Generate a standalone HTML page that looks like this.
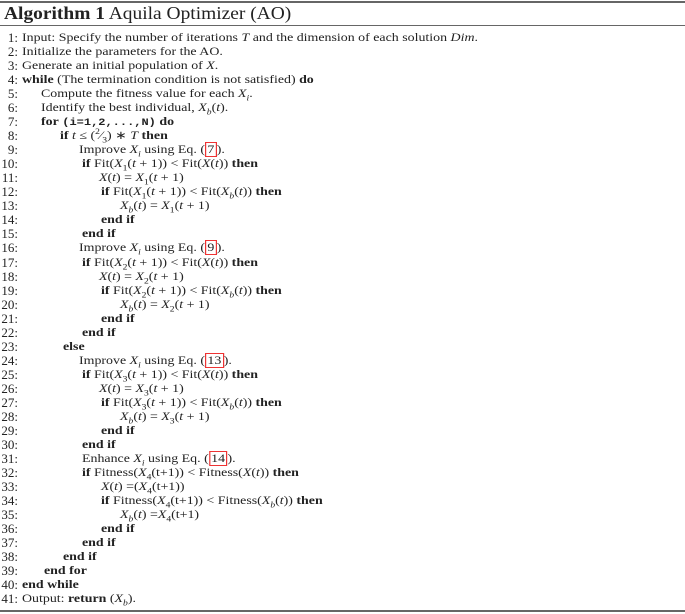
<!DOCTYPE html>
<html><head><style>
body{margin:0;width:685px;height:614px;background:#fff;position:relative;overflow:hidden;font-family:"Liberation Serif",serif;color:#222}
.r{position:absolute;left:0;width:685px;background:#666}
.t{position:absolute;left:4px;top:3px;font-size:18px;white-space:nowrap;transform:scaleX(1.08);transform-origin:left}
.l{position:absolute;font-size:11.6px;white-space:nowrap;line-height:14px;transform:scaleX(1.2);transform-origin:left}
.n{position:absolute;font-size:13px;line-height:14px;width:18px;text-align:right;left:0}
b{font-weight:bold}
.ref{border:1px solid #e33;padding:0 1px}
</style></head><body>
<div class="r" style="top:1px;height:2px"></div>
<div class="t"><b>Algorithm 1</b> Aquila Optimizer (AO)</div>
<div class="r" style="top:25px;height:1px"></div>
<div class="r" style="top:610px;height:2px"></div>
<div id="c"></div>
<script>
var L=[
[22,'Input: Specify the number of iterations <i>T</i> and the dimension of each solution <i>Dim</i>.'],
[22,'Initialize the parameters for the AO.'],
[22,'Generate an initial population of <i>X</i>.'],
[22,'<b>while</b> (The termination condition is not satisfied) <b>do</b>'],
[41,'Compute the fitness value for each <i>X<sub>i</sub></i>.'],
[41,'Identify the best individual, <i>X<sub>b</sub></i>(<i>t</i>).'],
[41,'<b>for</b> <b style="font-family:Liberation Mono,monospace;font-size:10px">(i=1,2,...,N)</b> <b>do</b>'],
[60,'<b>if</b> <i>t</i> ≤ (<sup>2</sup>⁄<sub>3</sub>) ∗ <i>T</i> <b>then</b>'],
[79,'Improve <i>X<sub>i</sub></i> using Eq. (<span class="ref">7</span>).'],
[82,'<b>if</b> Fit(<i>X</i><sub>1</sub>(<i>t</i> + 1)) &lt; Fit(<i>X</i>(<i>t</i>)) <b>then</b>'],
[99,'<i>X</i>(<i>t</i>) = <i>X</i><sub>1</sub>(<i>t</i> + 1)'],
[101,'<b>if</b> Fit(<i>X</i><sub>1</sub>(<i>t</i> + 1)) &lt; Fit(<i>X<sub>b</sub></i>(<i>t</i>)) <b>then</b>'],
[120,'<i>X<sub>b</sub></i>(<i>t</i>) = <i>X</i><sub>1</sub>(<i>t</i> + 1)'],
[101,'<b>end if</b>'],
[82,'<b>end if</b>'],
[79,'Improve <i>X<sub>i</sub></i> using Eq. (<span class="ref">9</span>).'],
[82,'<b>if</b> Fit(<i>X</i><sub>2</sub>(<i>t</i> + 1)) &lt; Fit(<i>X</i>(<i>t</i>)) <b>then</b>'],
[99,'<i>X</i>(<i>t</i>) = <i>X</i><sub>2</sub>(<i>t</i> + 1)'],
[101,'<b>if</b> Fit(<i>X</i><sub>2</sub>(<i>t</i> + 1)) &lt; Fit(<i>X<sub>b</sub></i>(<i>t</i>)) <b>then</b>'],
[120,'<i>X<sub>b</sub></i>(<i>t</i>) = <i>X</i><sub>2</sub>(<i>t</i> + 1)'],
[101,'<b>end if</b>'],
[82,'<b>end if</b>'],
[63,'<b>else</b>'],
[79,'Improve <i>X<sub>i</sub></i> using Eq. (<span class="ref">13</span>).'],
[82,'<b>if</b> Fit(<i>X</i><sub>3</sub>(<i>t</i> + 1)) &lt; Fit(<i>X</i>(<i>t</i>)) <b>then</b>'],
[99,'<i>X</i>(<i>t</i>) = <i>X</i><sub>3</sub>(<i>t</i> + 1)'],
[101,'<b>if</b> Fit(<i>X</i><sub>3</sub>(<i>t</i> + 1)) &lt; Fit(<i>X<sub>b</sub></i>(<i>t</i>)) <b>then</b>'],
[120,'<i>X<sub>b</sub></i>(<i>t</i>) = <i>X</i><sub>3</sub>(<i>t</i> + 1)'],
[101,'<b>end if</b>'],
[82,'<b>end if</b>'],
[82,'Enhance <i>X<sub>i</sub></i> using Eq. (<span class="ref">14</span>).'],
[82,'<b>if</b> Fitness(<i>X</i><sub>4</sub>(t+1)) &lt; Fitness(<i>X</i>(<i>t</i>)) <b>then</b>'],
[101,'<i>X</i>(<i>t</i>) =(<i>X</i><sub>4</sub>(t+1))'],
[101,'<b>if</b> Fitness(<i>X</i><sub>4</sub>(t+1)) &lt; Fitness(<i>X<sub>b</sub></i>(<i>t</i>)) <b>then</b>'],
[120,'<i>X<sub>b</sub></i>(<i>t</i>) =<i>X</i><sub>4</sub>(t+1)'],
[101,'<b>end if</b>'],
[82,'<b>end if</b>'],
[63,'<b>end if</b>'],
[44,'<b>end for</b>'],
[22,'<b>end while</b>'],
[22,'Output: <b>return</b> (<i>X<sub>b</sub></i>).']
];
var h='';
for(var k=0;k<L.length;k++){var y=(31+k*14.03).toFixed(1);
h+='<div class="n" style="top:'+y+'px">'+(k+1)+':</div><div class="l" style="left:'+L[k][0]+'px;top:'+y+'px">'+L[k][1].replace(/<sub>/g,'<sub style="font-size:8px;line-height:0">').replace(/<sup>/g,'<sup style="font-size:8px;line-height:0">')+'</div>';}
document.getElementById('c').innerHTML=h;
</script>
</body></html>
